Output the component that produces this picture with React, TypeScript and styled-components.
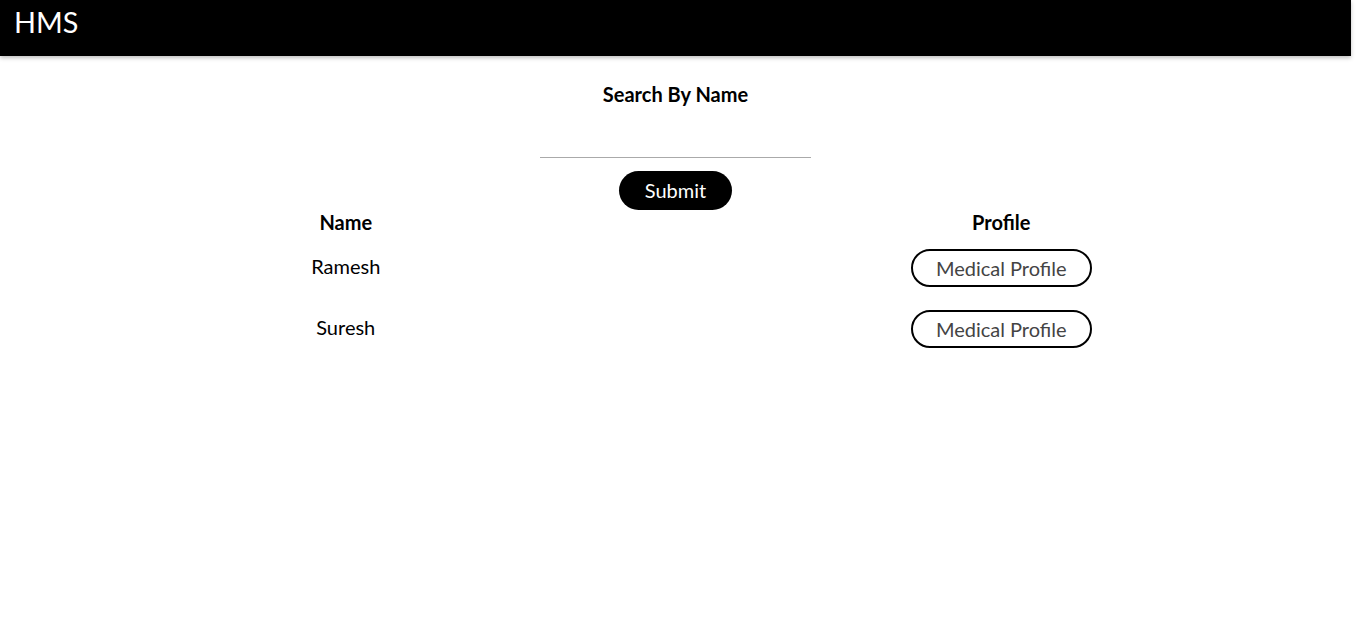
import React from "react";
import styled, { createGlobalStyle } from "styled-components";

const Global = createGlobalStyle`
  html, body { margin: 0; padding: 0; }
  body { font-family: Lato, "Open Sans", sans-serif; background: #fff; color: #000; }
  * { box-sizing: border-box; }
`;

const Page = styled.div`
  width: calc(100vw - 15px);
  min-height: calc(100vh + 40px);
  display: flex;
  flex-direction: column;
`;

const Header = styled.header`
  height: 56px;
  background: #000;
  color: #fff;
  padding: 5px 14px 0;
  box-shadow: 0 2px 4px rgba(0, 0, 0, 0.25);
`;

const Brand = styled.div`
  font-size: 28.8px;
  line-height: 1.2;
`;

const Main = styled.main`
  display: flex;
  flex-direction: column;
  align-items: center;
`;

const Title = styled.h3`
  margin: 26px 0 0;
  font-size: 20px;
  font-weight: 700;
  line-height: 1.2;
`;

const SearchInput = styled.input`
  margin-top: 24px;
  width: 271px;
  height: 28px;
  border: none;
  border-bottom: 1px solid #aaa;
  outline: none;
  font-family: inherit;
  font-size: 20px;
  background: transparent;
`;

const SubmitButton = styled.button`
  margin-top: 13px;
  height: 39px;
  padding: 0 26px 2px;
  border: none;
  border-radius: 20px;
  background: #000;
  color: #fff;
  font-family: inherit;
  font-size: 20px;
`;

const Table = styled.div`
  align-self: stretch;
  margin: -1px 22px 0 18px;
  display: grid;
  grid-template-columns: 1fr 1fr;
`;

const HeadCell = styled.div`
  text-align: center;
  font-weight: 700;
  font-size: 20px;
  line-height: 26px;
`;

const Cell = styled.div`
  height: 61px;
  display: flex;
  align-items: center;
  justify-content: center;
  font-size: 20px;
`;

const ProfileButton = styled.button`
  margin-top: 4px;
  height: 38px;
  width: 181px;
  border: 2px solid #000;
  border-radius: 20px;
  background: #fff;
  color: #444;
  font-family: inherit;
  font-size: 20px;
`;

const patients = ["Ramesh", "Suresh"];

export default function App() {
  return (
    <>
      <Global />
      <Page>
        <Header>
          <Brand>HMS</Brand>
        </Header>
        <Main>
          <Title>Search By Name</Title>
          <SearchInput type="text" />
          <SubmitButton>Submit</SubmitButton>
          <Table>
            <HeadCell>Name</HeadCell>
            <HeadCell>Profile</HeadCell>
            {patients.map((p) => (
              <React.Fragment key={p}>
                <Cell>{p}</Cell>
                <Cell>
                  <ProfileButton>Medical Profile</ProfileButton>
                </Cell>
              </React.Fragment>
            ))}
          </Table>
        </Main>
      </Page>
    </>
  );
}
